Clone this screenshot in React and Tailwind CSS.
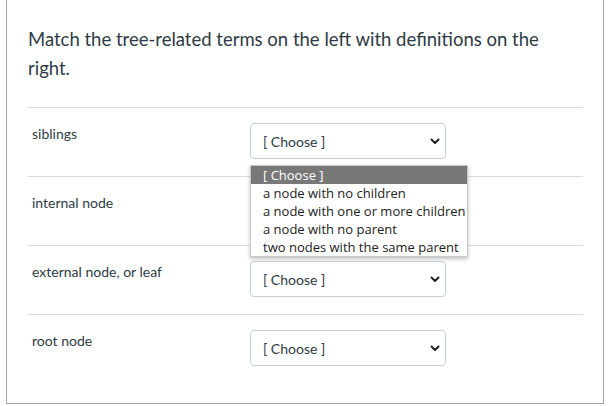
import React from "react";

const rows = [
  "siblings",
  "internal node",
  "external node, or leaf",
  "root node",
];

const options = [
  "[ Choose ]",
  "a node with no children",
  "a node with one or more children",
  "a node with no parent",
  "two nodes with the same parent",
];

function Chevron() {
  return (
    <svg width="10" height="7" viewBox="0 0 10 7" className="shrink-0">
      <path d="M1.5 1.5 L5 5 L8.5 1.5" fill="none" stroke="#222" strokeWidth="2" strokeLinecap="round" strokeLinejoin="round" />
    </svg>
  );
}

function Select() {
  return (
    <div className="w-[196px] h-[36px] border border-[#c7cdd1] rounded-[4px] bg-white flex items-center pl-[12px] pr-[5px] justify-between">
      <span className="text-[14px] text-[#2d3b45]">[ Choose ]</span>
      <Chevron />
    </div>
  );
}

export default function App() {
  return (
    <div className="w-[614px] h-[406px] bg-white relative overflow-hidden" style={{ fontFamily: "Lato, 'Liberation Sans', sans-serif" }}>
      <div className="ml-[6px] w-[598px] h-[404px] border-l border-r border-b border-[#a5a5a5]">
        <div className="pl-[21px] pr-[22px] pt-[25px] pb-[24px] text-[18.5px] leading-[29px] text-[#2d3b45]">
          Match the tree-related terms on the left with definitions on the right.
        </div>
        <div className="ml-[21px] w-[555px]">
          {rows.map((r) => (
            <div key={r} className="border-t border-[#dcdcdc] flex pt-[15px] pb-[17px]">
              <div className="w-[222px] pl-[4px] pt-[1px] text-[14px] leading-[20px] text-[#2d3b45]">{r}</div>
              <Select />
            </div>
          ))}
        </div>
      </div>
      <div
        className="absolute left-[250px] top-[165px] w-[218px] bg-white border border-[#c8c8c8] shadow-[0_2px_4px_rgba(0,0,0,0.25)]"
        style={{ fontFamily: "'Open Sans', Lato, sans-serif" }}
      >
        {options.map((o, i) => (
          <div
            key={o}
            className={
              "h-[18px] pl-[12px] text-[13px] leading-[18px] whitespace-nowrap " +
              (i === 0 ? "bg-[#787878] text-white" : "text-[#222]")
            }
          >
            {o}
          </div>
        ))}
      </div>
    </div>
  );
}
